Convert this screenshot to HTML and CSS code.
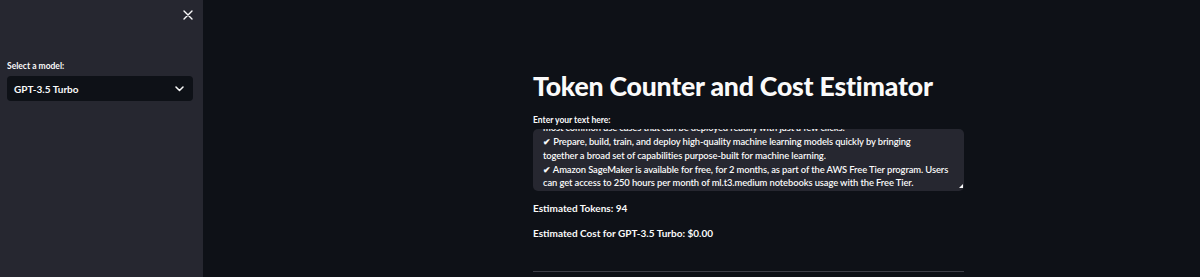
FILE: index.html
```html
<!DOCTYPE html>
<html lang="en">
<head>
    <meta charset="UTF-8">
    <meta name="viewport" content="width=device-width, initial-scale=1.0">
    <title>Token Counter</title>
    <link rel="stylesheet" href="styles.css">
</head>
<body>
    <div class="app">
        <aside class="sidebar">
            <div class="sidebar-top">
                <button class="close" aria-label="Close sidebar">
                    <svg width="10" height="10" viewBox="0 0 10 10"><path d="M1 1L9 9M9 1L1 9" stroke="#fafafa" stroke-width="1.4" stroke-linecap="round"/></svg>
                </button>
            </div>
            <label class="label">Select a model:</label>
            <div class="select">
                <span>GPT-3.5 Turbo</span>
                <svg width="9" height="6" viewBox="0 0 9 6"><path d="M1 1L4.5 4.5L8 1" fill="none" stroke="#fafafa" stroke-width="1.5" stroke-linecap="round" stroke-linejoin="round"/></svg>
            </div>
        </aside>
        <main class="main">
            <div class="block">
                <h1 class="title">Token Counter and Cost Estimator</h1>
                <label class="label">Enter your text here:</label>
                <div class="textarea">
                    <div class="text">
                        <p>Amazon SageMaker is a fully managed machine learning service.</p>
                        <p>✔ Get started quickly with built-in solutions for the</p>
                        <p>most common use cases that can be deployed readily with just a few clicks.</p>
                        <p>✔ Prepare, build, train, and deploy high-quality machine learning models quickly by bringing</p>
                        <p>together a broad set of capabilities purpose-built for machine learning.</p>
                        <p>✔ Amazon SageMaker is available for free, for 2 months, as part of the AWS Free Tier program. Users</p>
                        <p>can get access to 250 hours per month of ml.t3.medium notebooks usage with the Free Tier.</p>
                    </div>
                    <span class="grip"></span>
                </div>
                <p class="result">Estimated Tokens: 94</p>
                <p class="result">Estimated Cost for GPT-3.5 Turbo: $0.00</p>
                <hr class="rule">
            </div>
        </main>
    </div>
</body>
</html>
```

FILE: styles.css
```css
* {
    margin: 0;
    padding: 0;
    box-sizing: border-box;
}
body {
    background-color: #0e1117;
    color: #fafafa;
    font-family: Lato, "Open Sans", sans-serif;
    height: 277px;
    overflow: hidden;
}
.app {
    display: flex;
    height: 277px;
}

/* sidebar */
.sidebar {
    width: 203px;
    flex-shrink: 0;
    background-color: #262730;
    padding: 0 10px 0 7px;
}
.sidebar-top {
    height: 60px;
    display: flex;
    justify-content: flex-end;
    padding-top: 9px;
}
.close {
    width: 12px;
    height: 12px;
    background: none;
    border: none;
    display: flex;
    align-items: center;
    justify-content: center;
    margin-right: -1px;
}
.label {
    display: block;
    font-size: 8.5px;
    font-weight: 700;
    line-height: 12px;
    margin-bottom: 4px;
}
.select {
    height: 25px;
    background-color: #0e1117;
    border-radius: 4px;
    display: flex;
    align-items: center;
    justify-content: space-between;
    padding: 0 9px 0 7px;
    font-size: 10px;
    font-weight: 700;
}

/* main */
.main {
    flex: 1;
    display: flex;
    justify-content: center;
    padding-left: 94px;
}
.block {
    width: 431px;
    padding-top: 69px;
}
.title {
    font-size: 26.6px;
    font-weight: 900;
    line-height: 34px;
    letter-spacing: -0.2px;
    margin-bottom: 11px;
}
.textarea {
    position: relative;
    height: 62px;
    background-color: #262730;
    border-radius: 5px;
    overflow: hidden;
    display: flex;
    flex-direction: column;
    justify-content: flex-end;
    padding: 0 10px 1px 10px;
    margin-top: -1px;
}
.text {
    font-size: 9.4px;
    font-weight: 600;
    line-height: 13.7px;
    letter-spacing: -0.1px;
    white-space: nowrap;
}
.grip {
    position: absolute;
    right: 1px;
    bottom: 3px;
    width: 0;
    height: 0;
    border-left: 4px solid transparent;
    border-bottom: 4px solid #fafafa;
}
.result {
    font-size: 10px;
    font-weight: 700;
    line-height: 14px;
    margin-top: 10px;
}
.result + .result {
    margin-top: 11px;
}
.rule {
    border: none;
    border-top: 1px solid #3d3e47;
    margin-top: 31px;
}
```
